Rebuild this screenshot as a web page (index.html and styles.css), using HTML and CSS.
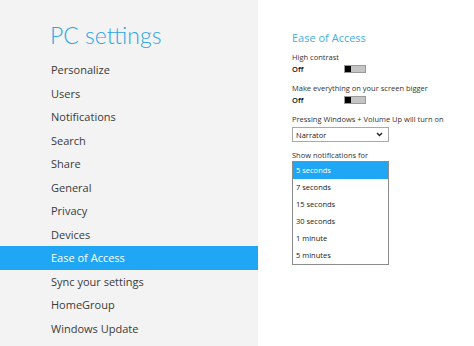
FILE: index.html
```html
<!DOCTYPE html>
<html lang="en">
<head>
    <meta charset="UTF-8">
    <title>PC settings</title>
    <link rel="stylesheet" href="styles.css">
</head>
<body>
    <div class="nav">
        <h1 class="title">PC settings</h1>
        <ul class="menu">
            <li>Personalize</li>
            <li>Users</li>
            <li>Notifications</li>
            <li>Search</li>
            <li>Share</li>
            <li>General</li>
            <li>Privacy</li>
            <li>Devices</li>
            <li class="selected">Ease of Access</li>
            <li>Sync your settings</li>
            <li>HomeGroup</li>
            <li>Windows Update</li>
        </ul>
    </div>

    <div class="content">
        <h2 class="heading">Ease of Access</h2>

        <div class="setting">
            <div class="label">High contrast</div>
            <div class="switch-row">
                <span class="state">Off</span>
                <span class="switch"><span class="thumb"></span></span>
            </div>
        </div>

        <div class="setting">
            <div class="label">Make everything on your screen bigger</div>
            <div class="switch-row">
                <span class="state">Off</span>
                <span class="switch"><span class="thumb"></span></span>
            </div>
        </div>

        <div class="setting">
            <div class="label">Pressing Windows + Volume Up will turn on</div>
            <div class="select">
                <span>Narrator</span>
                <svg class="chevron" width="7" height="5" viewBox="0 0 7 5">
                    <path d="M1 1 L3.5 3.5 L6 1" fill="none" stroke="#222" stroke-width="1.4"/>
                </svg>
            </div>
        </div>

        <div class="setting">
            <div class="label">Show notifications for</div>
            <ul class="listbox">
                <li class="active">5 seconds</li>
                <li>7 seconds</li>
                <li>15 seconds</li>
                <li>30 seconds</li>
                <li>1 minute</li>
                <li>5 minutes</li>
            </ul>
        </div>
    </div>
</body>
</html>
```

FILE: styles.css
```css
body {
    margin: 0;
    font-family: "Open Sans", "Noto Sans", sans-serif;
    display: flex;
    height: 346px;
    background-color: #fff;
    overflow: hidden;
}

.nav {
    width: 258px;
    background-color: #f3f3f3;
}

.title {
    margin: 0;
    padding: 20px 0 0 50px;
    height: 38px;
    font-family: Lato, "Open Sans", sans-serif;
    font-size: 23px;
    font-weight: 300;
    line-height: 30px;
    color: #2ea6e6;
}

.menu {
    list-style: none;
    margin: 0;
    padding: 0;
}

.menu li {
    height: 23.5px;
    line-height: 23.5px;
    padding-left: 51px;
    font-size: 11px;
    color: #3a3a3a;
}

.menu li.selected {
    background-color: #1fa6f4;
    color: #fff;
}

.content {
    padding: 30px 0 0 34px;
}

.heading {
    margin: 0 0 5px;
    font-size: 11px;
    font-weight: 400;
    line-height: 16px;
    color: #45aee4;
}

.setting {
    margin-bottom: 7px;
}

.label {
    font-size: 7.5px;
    line-height: 12px;
    color: #333;
}

.switch-row {
    display: flex;
    align-items: center;
    height: 12px;
}

.state {
    width: 52px;
    font-size: 7.5px;
    font-weight: 600;
    color: #111;
}

.switch {
    display: flex;
    width: 22px;
    height: 8px;
    background-color: #c4c4c4;
    border: 1px solid #9a9a9a;
    box-sizing: border-box;
}

.thumb {
    width: 6px;
    height: 100%;
    background-color: #000;
}

.select {
    display: flex;
    align-items: center;
    justify-content: space-between;
    width: 97px;
    height: 15px;
    margin-top: 2px;
    padding: 0 5px 0 3px;
    box-sizing: border-box;
    border: 1px solid #a8a8a8;
    font-size: 7.5px;
    color: #222;
}

.listbox {
    list-style: none;
    margin: 0;
    padding: 0;
    width: 97px;
    border: 1px solid #8c8c8c;
    box-sizing: border-box;
}

.listbox li {
    height: 17px;
    line-height: 17px;
    padding-left: 3px;
    font-size: 7.5px;
    color: #222;
}

.listbox li.active {
    background-color: #1fa6f4;
    color: #fff;
}
```
